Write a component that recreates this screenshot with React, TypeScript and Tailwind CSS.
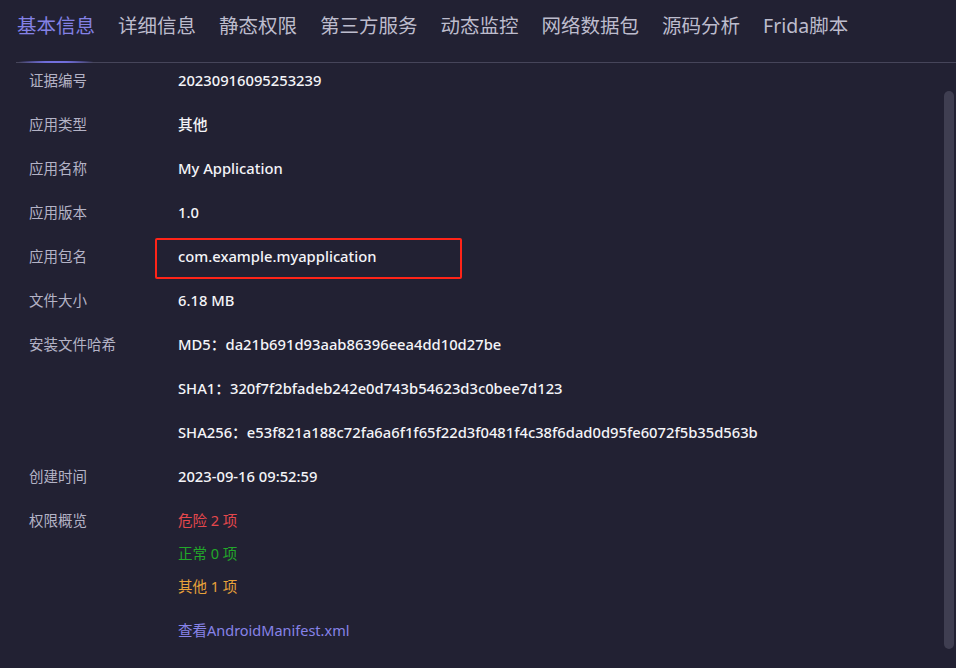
import React from "react";

const tabs = ["基本信息", "详细信息", "静态权限", "第三方服务", "动态监控", "网络数据包", "源码分析", "Frida脚本"];

const font = { fontFamily: '"Noto Sans", "Noto Sans CJK SC", sans-serif' };

function Row({ label, children, h = "h-[44px]" }: { label?: string; children: React.ReactNode; h?: string }) {
  return (
    <div className={`flex ${h}`}>
      <div className="w-[149px] shrink-0 text-[14.5px] leading-[22px] text-[#b4b3c6]">{label}</div>
      <div className="text-[14.75px] leading-[22px] text-[#f4f4f8] font-medium">{children}</div>
    </div>
  );
}

export default function App() {
  return (
    <div className="w-[956px] h-[668px] bg-[#222133] overflow-hidden flex flex-col" style={font}>
      <div className="ml-[16px] h-[63px] border-b border-[#46455a] relative flex gap-[23px] pt-[12px] pl-[1px]">
        {tabs.map((t, i) => (
          <div
            key={t}
            className={`text-[19.5px] leading-[28px] whitespace-nowrap ${i === 0 ? "text-[#8481e6]" : "text-[#bdbccd]"}`}
          >
            {t}
          </div>
        ))}
        <div className="absolute left-[0px] bottom-[-1px] w-[80px] h-[2px] bg-[radial-gradient(ellipse_at_center,#8c89ff_0%,#6f6cd8_40%,rgba(34,33,51,0)_75%)]" />
      </div>
      <div className="flex flex-1">
        <div className="flex-1 pl-[29px] pt-[6px]">
          <Row label="证据编号">20230916095253239</Row>
          <Row label="应用类型">其他</Row>
          <Row label="应用名称">My Application</Row>
          <Row label="应用版本">1.0</Row>
          <Row label="应用包名">
            <div className="relative">
              com.example.myapplication
              <div className="absolute left-[-23px] top-[-7px] w-[307px] h-[41px] border-[2.5px] border-[#ff2418] rounded-[2px]" />
            </div>
          </Row>
          <Row label="文件大小">6.18 MB</Row>
          <Row label="安装文件哈希">MD5：da21b691d93aab86396eea4dd10d27be</Row>
          <Row>SHA1：320f7f2bfadeb242e0d743b54623d3c0bee7d123</Row>
          <Row>SHA256：e53f821a188c72fa6a6f1f65f22d3f0481f4c38f6dad0d95fe6072f5b35d563b</Row>
          <Row label="创建时间">2023-09-16 09:52:59</Row>
          <div className="flex">
            <div className="w-[149px] shrink-0 text-[14.5px] leading-[22px] text-[#b4b3c6]">权限概览</div>
            <div className="flex flex-col text-[14.5px] leading-[22px]">
              <div className="h-[33px] text-[#e5484d]">危险 2 项</div>
              <div className="h-[33px] text-[#22a82a]">正常 0 项</div>
              <div className="h-[44px] text-[#e8a23a]">其他 1 项</div>
              <div className="text-[#8783e8]">查看AndroidManifest.xml</div>
            </div>
          </div>
        </div>
        <div className="w-[11px] mr-[1px] pt-[28px]">
          <div className="w-[10px] h-[558px] rounded-[5px] bg-[#3f3e51]" />
        </div>
      </div>
    </div>
  );
}
